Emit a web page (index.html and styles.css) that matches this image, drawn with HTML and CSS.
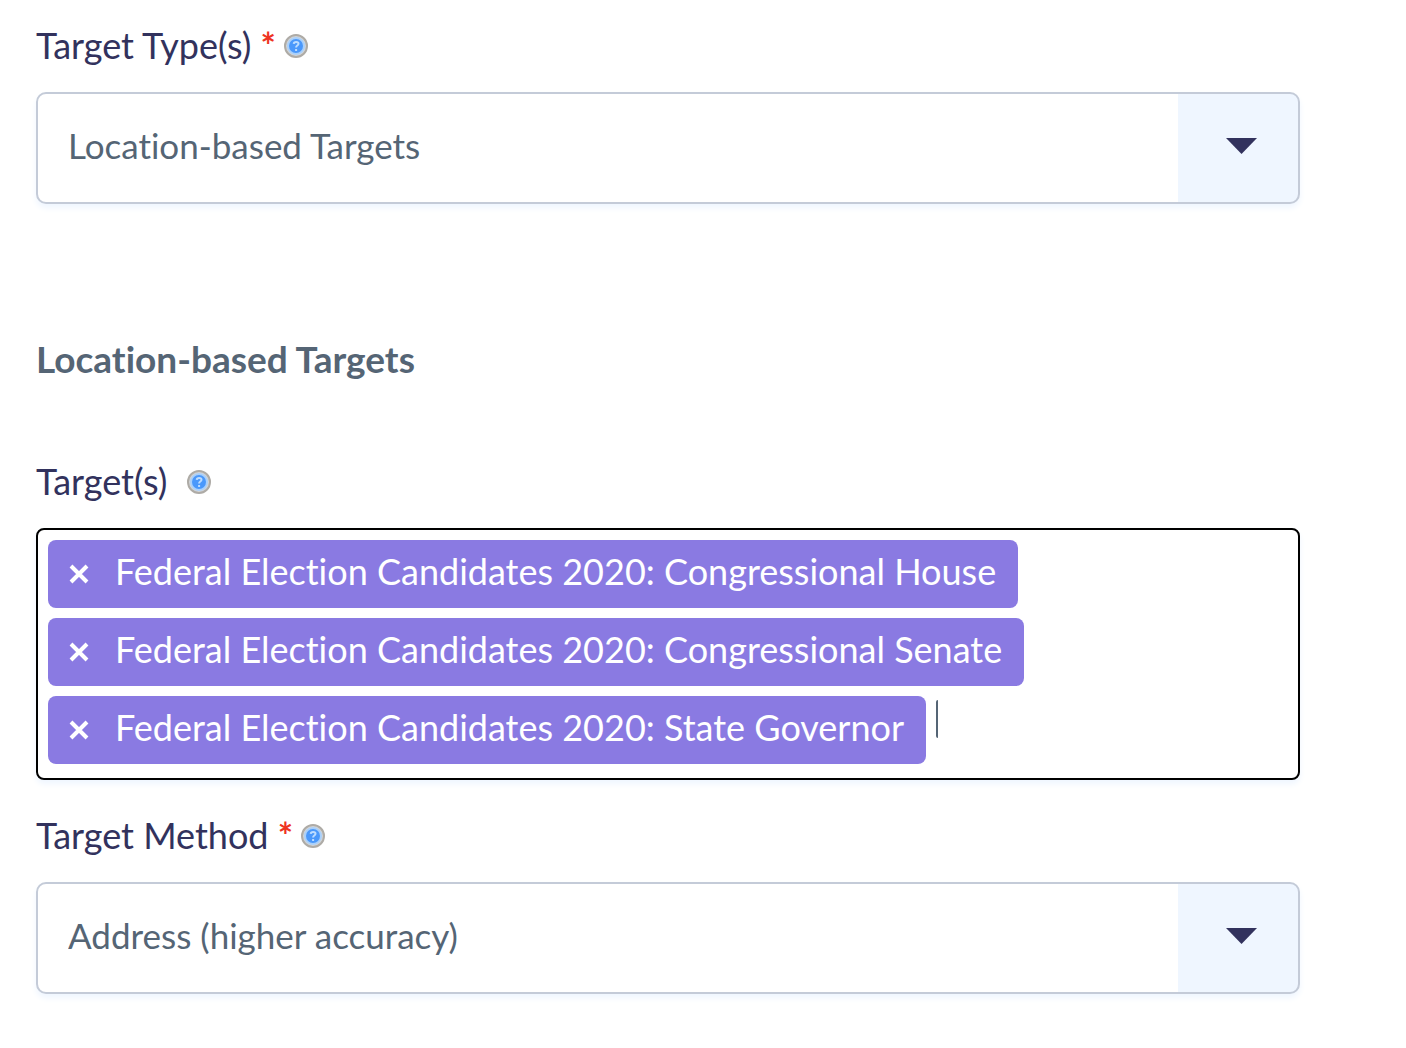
FILE: index.html
```html
<!DOCTYPE html>
<html lang="en">
<head>
    <meta charset="UTF-8">
    <meta name="viewport" content="width=device-width, initial-scale=1.0">
    <title>Targets</title>
    <link rel="stylesheet" href="styles.css">
</head>
<body>
    <!-- Shared help icon -->
    <svg class="sprite" aria-hidden="true">
        <symbol id="help" viewBox="0 0 24 24">
            <circle cx="12" cy="12" r="11" fill="#d2d4d6" stroke="#aeaba6" stroke-width="2"/>
            <circle cx="12" cy="12" r="8" fill="#4a98fb" stroke="#a9d0fb" stroke-width="2"/>
            <path d="M9.7 9.8c.2-2.4 4.8-2.4 4.8 0 0 1.8-2.4 1.7-2.4 3.6M12.1 15v2" fill="none" stroke="#bcdcff" stroke-width="2"/>
        </symbol>
    </svg>

    <form class="target-form">
        <div class="field">
            <div class="field-label">
                <label for="targetType">Target Type(s) <span class="required">*</span></label>
                <button type="button" class="help-btn" aria-label="Help"><svg><use href="#help"/></svg></button>
            </div>
            <select id="targetType" class="select">
                <option>Location-based Targets</option>
            </select>
        </div>

        <h2>Location-based Targets</h2>

        <div class="field">
            <div class="field-label optional">
                <label for="targetSearch">Target(s)</label>
                <button type="button" class="help-btn" aria-label="Help"><svg><use href="#help"/></svg></button>
            </div>
            <div class="tag-box">
                <div class="tag">
                    <button type="button" class="tag-remove" aria-label="Remove"><svg viewBox="0 0 20 20"><path d="M2 2l16 16M18 2L2 18"/></svg></button>
                    <span>Federal Election Candidates 2020: Congressional House</span>
                </div>
                <div class="tag">
                    <button type="button" class="tag-remove" aria-label="Remove"><svg viewBox="0 0 20 20"><path d="M2 2l16 16M18 2L2 18"/></svg></button>
                    <span>Federal Election Candidates 2020: Congressional Senate</span>
                </div>
                <div class="tag">
                    <button type="button" class="tag-remove" aria-label="Remove"><svg viewBox="0 0 20 20"><path d="M2 2l16 16M18 2L2 18"/></svg></button>
                    <span>Federal Election Candidates 2020: State Governor</span>
                </div>
                <input type="text" id="targetSearch" class="tag-input">
            </div>
        </div>

        <div class="field">
            <div class="field-label">
                <label for="targetMethod">Target Method <span class="required">*</span></label>
                <button type="button" class="help-btn" aria-label="Help"><svg><use href="#help"/></svg></button>
            </div>
            <select id="targetMethod" class="select">
                <option>Address (higher accuracy)</option>
            </select>
        </div>
    </form>
</body>
</html>
```
FILE: styles.css
```css
* {
    box-sizing: border-box;
}
body {
    font-family: Lato, 'Open Sans', sans-serif;
    font-size: 36px;
    line-height: 48px;
    font-variant-ligatures: none;
    color: #556575;
    margin: 0;
    padding: 22px 106px 54px 36px;
    background-color: #fff;
}
.sprite {
    display: none;
}
.field {
    margin-bottom: 32px;
}
.field-label {
    display: flex;
    align-items: center;
    gap: 8px;
    margin-bottom: 22px;
    color: #32325d;
}
.field-label.optional {
    gap: 20px;
}
.field-label label {
    line-height: 46px;
    padding-bottom: 2px;
}
.required {
    color: #ee3322;
    font-weight: bold;
}
.help-btn {
    width: 24px;
    height: 24px;
    padding: 0;
    border: none;
    background: none;
    cursor: pointer;
}
.help-btn svg {
    display: block;
    width: 24px;
    height: 24px;
}
h2 {
    font-size: 37px;
    line-height: 48px;
    font-weight: bold;
    margin: 131px 0 75px;
}
.select {
    display: block;
    width: 100%;
    height: 112px;
    padding: 0 150px 6px 30px;
    border: 2px solid #c4cbd8;
    border-radius: 10px;
    box-shadow: 0 4px 6px #eff6ff;
    font: inherit;
    font-size: 35px;
    color: inherit;
    appearance: none;
    background-color: #fff;
    background-image:
        url("data:image/svg+xml,%3Csvg xmlns='http://www.w3.org/2000/svg' width='31' height='16'%3E%3Cpath d='M0 0h31L15.5 16z' fill='%2332325d'/%3E%3C/svg%3E"),
        linear-gradient(#eff6ff, #eff6ff);
    background-repeat: no-repeat;
    background-position: right 41px top 44px, right top;
    background-size: 31px 16px, 120px 100%;
}
.tag-box {
    display: flex;
    flex-wrap: wrap;
    align-items: flex-start;
    gap: 10px;
    padding: 10px 10px 14px;
    border: 2px solid #000;
    border-radius: 8px;
    box-shadow: 0 4px 6px #eff6ff;
}
.tag {
    display: flex;
    align-items: center;
    gap: 26px;
    padding: 10px 22px 10px 21px;
    border-radius: 8px;
    color: #fff;
    background-color: #8a7ae2;
}
.tag span {
    line-height: 42px;
    padding-bottom: 6px;
}
.tag-remove {
    width: 20px;
    height: 20px;
    padding: 0;
    border: none;
    background: none;
    cursor: pointer;
}
.tag-remove svg {
    display: block;
    width: 20px;
    height: 20px;
    fill: none;
    stroke: #fff;
    stroke-width: 4;
}
.tag-input {
    flex: 1;
    min-width: 40px;
    height: 38px;
    margin-top: 4px;
    padding: 0;
    border: none;
    border-left: 2px solid #556575;
    border-radius: 2px;
    outline: none;
    font: inherit;
    color: inherit;
}
```
